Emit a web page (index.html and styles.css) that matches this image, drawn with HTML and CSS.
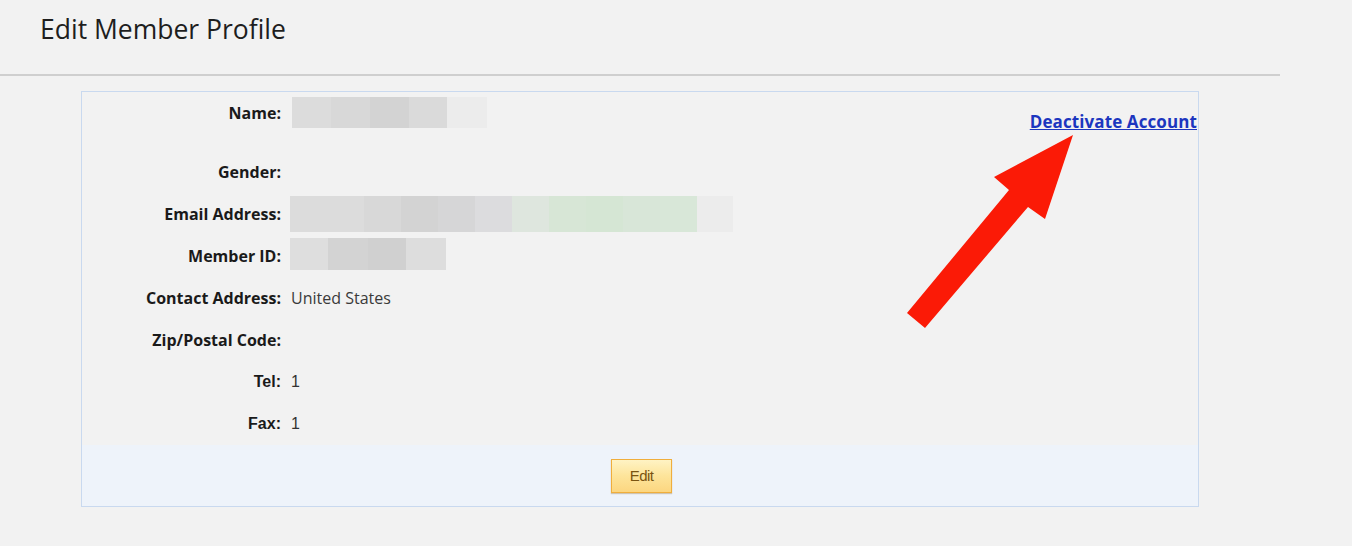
FILE: index.html
```html
<!DOCTYPE html>
<html lang="en">
<head>
<meta charset="utf-8">
<title>Edit Member Profile</title>
<link rel="stylesheet" href="styles.css">
</head>
<body>
<div class="page">
  <header class="header">
    <h1 class="title">Edit Member Profile</h1>
  </header>
  <section class="box">
    <div class="main">
      <div class="fields">
        <div class="row row-first">
          <span class="label">Name:</span>
          <span class="value">
            <span class="blur blur-name">
              <i class="c1"></i><i class="c2"></i><i class="c3"></i><i class="c4"></i><i class="c5"></i>
            </span>
          </span>
        </div>
        <div class="row">
          <span class="label">Gender:</span>
          <span class="value"></span>
        </div>
        <div class="row">
          <span class="label">Email Address:</span>
          <span class="value">
            <span class="blur blur-email">
              <i class="e1"></i><i class="e2"></i><i class="e3"></i><i class="e4"></i><i class="e5"></i><i class="e6"></i><i class="e7"></i><i class="e8"></i><i class="e9"></i><i class="e10"></i><i class="e11"></i><i class="e12"></i>
            </span>
          </span>
        </div>
        <div class="row">
          <span class="label">Member ID:</span>
          <span class="value">
            <span class="blur blur-id">
              <i class="m1"></i><i class="m2"></i><i class="m3"></i><i class="m4"></i>
            </span>
          </span>
        </div>
        <div class="row">
          <span class="label">Contact Address:</span>
          <span class="value text">United States</span>
        </div>
        <div class="row">
          <span class="label">Zip/Postal Code:</span>
          <span class="value"></span>
        </div>
        <div class="row">
          <span class="label label-arial">Tel:</span>
          <span class="value text-arial">1</span>
        </div>
        <div class="row">
          <span class="label label-arial">Fax:</span>
          <span class="value text-arial">1</span>
        </div>
      </div>
      <a class="deactivate" href="#">Deactivate Account</a>
    </div>
    <div class="footer">
      <button class="edit" type="button">Edit</button>
    </div>
  </section>
  <svg class="arrow" width="1352" height="546" viewBox="0 0 1352 546" aria-hidden="true">
    <polygon points="1073,135 1045,219 1028,207 925,328 907,313 1009,190 994,177" fill="#fb1a06"/>
  </svg>
</div>
</body>
</html>
```

FILE: styles.css
```css
html, body {
  margin: 0;
  padding: 0;
  background: #f2f2f2;
}

.page {
  position: relative;
  width: 1352px;
  height: 546px;
  overflow: hidden;
  font-family: "Open Sans", "DejaVu Sans", sans-serif;
  color: #222;
}

.header {
  width: 1280px;
  height: 74px;
  border-bottom: 2px solid #cfcfcf;
  box-sizing: content-box;
}

.title {
  margin: 0;
  padding: 11px 0 0 40px;
  font-size: 26.5px;
  line-height: 36px;
  font-weight: 400;
  color: #1e1e1e;
}

.box {
  margin: 15px 0 0 81px;
  width: 1116px;
  border: 1px solid #c9d9ef;
  background: #f2f2f2;
}

.main {
  display: flex;
  justify-content: space-between;
  align-items: flex-start;
}

.fields {
  display: flex;
  flex-direction: column;
}

.row {
  display: grid;
  grid-template-columns: 199px auto;
  column-gap: 10px;
  align-items: center;
  height: 42px;
}

.row-first {
  margin-bottom: 17px;
}

.label {
  text-align: right;
  font-weight: 700;
  font-size: 16px;
  color: #1a1a1a;
  letter-spacing: 0;
}

.label-arial {
  font-family: "Liberation Sans", Arial, sans-serif;
  font-size: 16px;
}

.value {
  display: flex;
  align-items: center;
}

.text {
  font-size: 16px;
  color: #3a3a3a;
}

.text-arial {
  font-family: "Liberation Sans", Arial, sans-serif;
  font-size: 16px;
  color: #333;
}

.blur {
  display: flex;
}

.blur i {
  display: block;
  height: 100%;
}

.blur-name {
  height: 31px;
  margin-left: 1px;
  margin-top: -1px;
}
.blur-name .c1 { width: 39px; background: #dcdcdc; }
.blur-name .c2 { width: 39px; background: #d8d8d8; }
.blur-name .c3 { width: 39px; background: #d3d3d3; }
.blur-name .c4 { width: 38px; background: #dadada; }
.blur-name .c5 { width: 40px; background: #ececec; }

.blur-email {
  height: 36px;
  margin-left: -1px;
}
.blur-email .e1 { width: 37px; background: #dcdcdc; }
.blur-email .e2 { width: 37px; background: #dcdcdc; }
.blur-email .e3 { width: 37px; background: #d8d8d8; }
.blur-email .e4 { width: 37px; background: #d3d3d3; }
.blur-email .e5 { width: 37px; background: #d6d6d7; }
.blur-email .e6 { width: 37px; background: #dcdcde; }
.blur-email .e7 { width: 37px; background: #dee6de; }
.blur-email .e8 { width: 37px; background: #d7e6d6; }
.blur-email .e9 { width: 37px; background: #d5e6d4; }
.blur-email .e10 { width: 37px; background: #d8e6d8; }
.blur-email .e11 { width: 37px; background: #d8e7d8; }
.blur-email .e12 { width: 36px; background: #ececec; }

.blur-id {
  height: 32px;
  margin-left: -1px;
  margin-top: -4px;
}
.blur-id .m1 { width: 38px; background: #dedede; }
.blur-id .m2 { width: 40px; background: #d3d3d3; }
.blur-id .m3 { width: 38px; background: #d0d0d0; }
.blur-id .m4 { width: 40px; background: #dddddd; }

.deactivate {
  margin: 19px 1px 0 0;
  font-size: 17px;
  font-weight: 700;
  color: #1c36bf;
  text-decoration: underline;
  letter-spacing: 0.1px;
  line-height: 22px;
}

.footer {
  height: 61px;
  background: #eef3fa;
  display: flex;
  justify-content: center;
  align-items: center;
}

.edit {
  width: 61px;
  height: 34px;
  margin-left: 3px;
  padding: 0;
  border: 1px solid #f0ae3c;
  background: linear-gradient(#fff3c4, #fde49a 50%, #fcd680);
  box-shadow: 0 1px 1px rgba(150, 110, 40, 0.35);
  font-family: "Liberation Sans", Arial, sans-serif;
  font-size: 15px;
  color: #7a5410;
  letter-spacing: -0.6px;
}

.arrow {
  position: absolute;
  left: 0;
  top: 0;
  pointer-events: none;
}
```
